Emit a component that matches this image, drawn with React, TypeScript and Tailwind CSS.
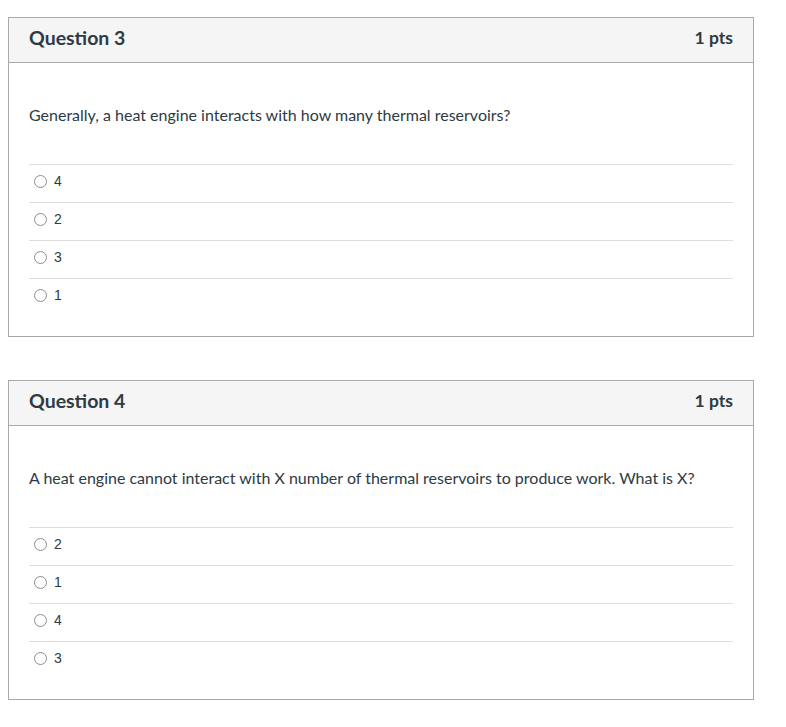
const QUESTIONS = [
  {
    title: 'Question 3',
    points: '1 pts',
    text: 'Generally, a heat engine interacts with how many thermal reservoirs?',
    answers: ['4', '2', '3', '1'],
  },
  {
    title: 'Question 4',
    points: '1 pts',
    text: 'A heat engine cannot interact with X number of thermal reservoirs to produce work. What is X?',
    answers: ['2', '1', '4', '3'],
  },
];

type Question = (typeof QUESTIONS)[number];

const QuestionCard: React.FC<{ q: Question }> = ({ q }) => (
  <div className="w-[746px] border border-[#aaaaaa] bg-white">
    {/* Header */}
    <div className="flex h-[45px] items-center justify-between border-b border-[#aaaaaa] bg-[#f5f5f5] px-5 pb-1">
      <h2 className="text-[19.5px] font-bold text-[#2d3b45]">{q.title}</h2>
      <span className="text-[17.5px] font-bold text-[#2d3b45]">{q.points}</span>
    </div>

    {/* Body */}
    <div className="px-5 pb-5 pt-[40px]">
      <p className="mb-[37px] text-[16px] leading-6 text-[#2d3b45]">{q.text}</p>
      <div>
        {q.answers.map((answer, index) => (
          <div
            key={index}
            className="flex h-[38px] items-center border-t border-[#dddddd] pb-1 pl-[5px]"
          >
            <span className="h-[13px] w-[13px] rounded-full border border-[#8d8d8d] bg-white" />
            <span className="ml-[7px] font-['Liberation_Sans',Arial,sans-serif] text-[14px] text-[#2d3b45]">
              {answer}
            </span>
          </div>
        ))}
      </div>
    </div>
  </div>
);

export default function App() {
  return (
    <div className="min-h-screen bg-white pl-2 pt-[17px] font-['Lato',sans-serif]">
      <div className="flex flex-col gap-[43px]">
        {QUESTIONS.map((q) => (
          <QuestionCard key={q.title} q={q} />
        ))}
      </div>
    </div>
  );
}
